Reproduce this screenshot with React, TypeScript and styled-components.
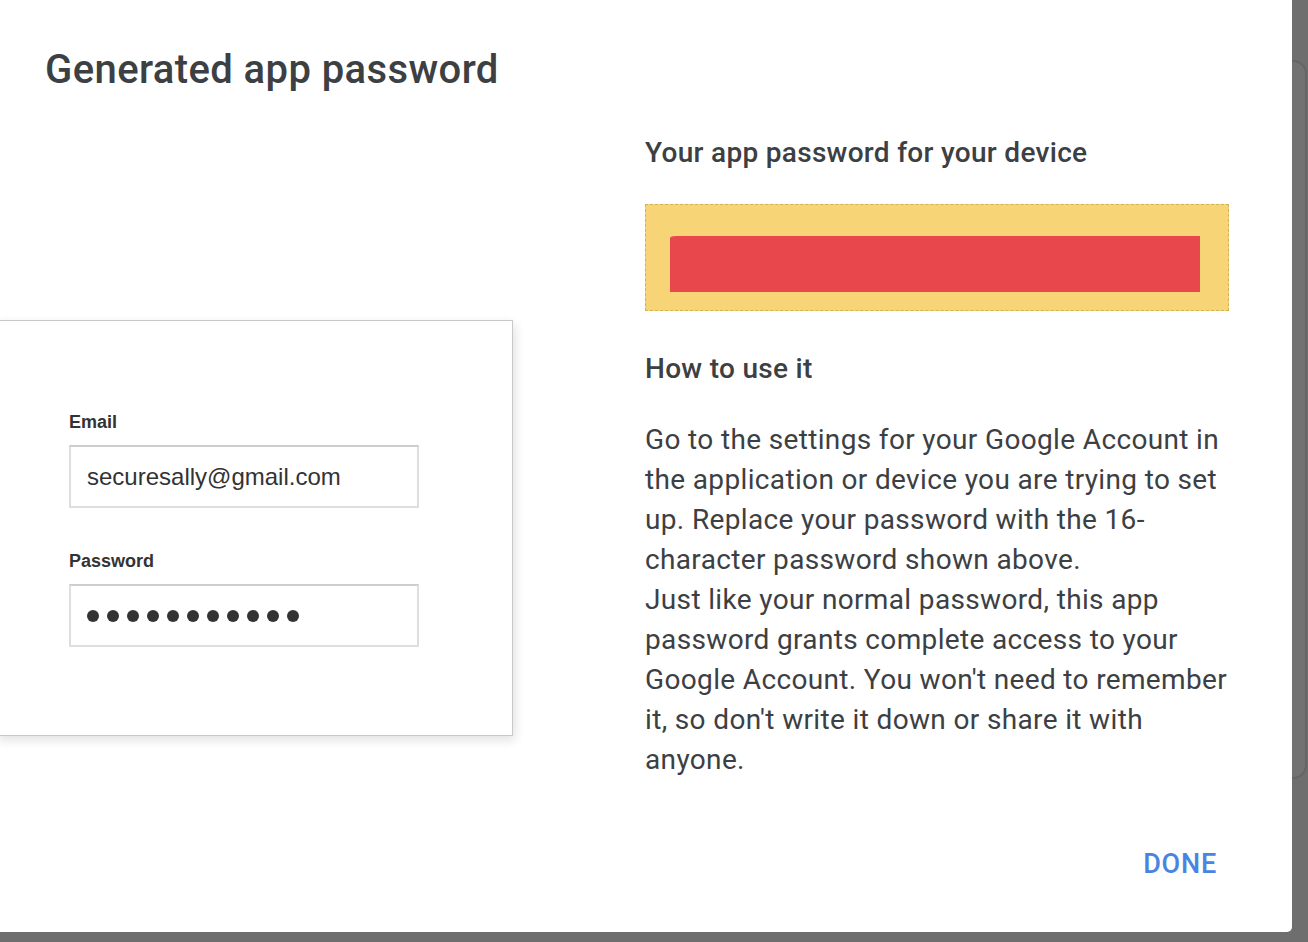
import styled, { createGlobalStyle } from 'styled-components';

const GlobalStyle = createGlobalStyle`
  html, body {
    margin: 0;
    padding: 0;
    background: #6e6e6e;
    overflow: hidden;
  }
`;

const Backdrop = styled.div`
  position: relative;
  width: 1308px;
  height: 942px;
  background: #6e6e6e;
  overflow: hidden;
`;

/* settings page peeking out behind the modal */
const PageBehind = styled.div`
  position: absolute;
  top: 60px;
  left: 900px;
  width: 403px;
  height: 715px;
  border-radius: 14px;
  border: 2px solid #656565;
  background: #727272;
`;

const Dialog = styled.div`
  position: relative;
  width: 1292px;
  height: 932px;
  background: #ffffff;
  border-bottom-right-radius: 5px;
  display: flex;
  flex-direction: column;
  font-family: Roboto, 'Noto Sans', sans-serif;
  color: #3c4043;
`;

const Title = styled.h1`
  margin: 0;
  padding: 44px 0 0 45px;
  font-size: 40px;
  font-weight: 500;
  line-height: 52px;
  letter-spacing: 0.4px;
`;

const Body = styled.div`
  display: flex;
  flex: 1;
`;

const LeftColumn = styled.div`
  width: 645px;
  flex-shrink: 0;
`;

const LoginCard = styled.div`
  margin: 224px 0 0 -4px;
  width: 517px;
  height: 416px;
  box-sizing: border-box;
  border: 1px solid #c9c9c9;
  background: #fff;
  box-shadow: 2px 4px 10px rgba(0, 0, 0, 0.12);
  padding: 90px 0 0 72px;
  font-family: 'Liberation Sans', Arial, sans-serif;
`;

const FieldLabel = styled.div`
  font-size: 18px;
  font-weight: 700;
  color: #333;
  line-height: 22px;
  margin-bottom: 12px;
`;

const FieldBox = styled.div`
  width: 350px;
  height: 63px;
  box-sizing: border-box;
  border: 2px solid #dedede;
  border-top-color: #cdcdcd;
  display: flex;
  align-items: center;
  padding-left: 16px;
  font-size: 24px;
  color: #333;
  margin-bottom: 42px;
`;

const Dots = styled.div`
  display: flex;
  gap: 8px;
`;

const Dot = styled.span`
  width: 12px;
  height: 12px;
  border-radius: 50%;
  background: #333;
`;

const RightColumn = styled.div`
  width: 600px;
  padding-top: 39px;
`;

const Heading = styled.h2`
  margin: 0;
  font-size: 28px;
  font-weight: 500;
  line-height: 36px;
  letter-spacing: 0.3px;
`;

const PasswordBox = styled.div`
  margin: 33px 0 40px;
  width: 584px;
  height: 107px;
  box-sizing: border-box;
  background: #f7d576;
  border: 1px dashed #cfb35a;
  padding: 31px 27px 0 24px;
`;

const Redaction = styled.div`
  width: 530px;
  height: 56px;
  background: #e8474c;
  border-top-left-radius: 6px 2px;
`;

const Instructions = styled.p`
  margin: 33px 0 0;
  font-size: 28px;
  line-height: 40px;
  letter-spacing: 0.35px;
  white-space: nowrap;
  color: #3c4043;
`;

const Footer = styled.div`
  display: flex;
  justify-content: flex-end;
  padding: 0 75px 52px 0;
`;

const DoneButton = styled.button`
  border: none;
  background: none;
  padding: 0;
  font-family: Roboto, 'Noto Sans', sans-serif;
  font-size: 27px;
  font-weight: 500;
  color: #4a84e3;
  letter-spacing: 0.8px;
  cursor: pointer;
`;

const instructionLines = [
  'Go to the settings for your Google Account in',
  'the application or device you are trying to set',
  'up. Replace your password with the 16-',
  'character password shown above.',
  'Just like your normal password, this app',
  'password grants complete access to your',
  "Google Account. You won't need to remember",
  "it, so don't write it down or share it with",
  'anyone.',
];

export default function App() {
  return (
    <>
      <GlobalStyle />
      <Backdrop>
        <PageBehind />
        <Dialog>
          <Title>Generated app password</Title>
          <Body>
            <LeftColumn>
              <LoginCard>
                <FieldLabel>Email</FieldLabel>
                <FieldBox>securesally@gmail.com</FieldBox>
                <FieldLabel>Password</FieldLabel>
                <FieldBox>
                  <Dots>
                    {Array.from({ length: 11 }, (_, i) => (
                      <Dot key={i} />
                    ))}
                  </Dots>
                </FieldBox>
              </LoginCard>
            </LeftColumn>
            <RightColumn>
              <Heading>Your app password for your device</Heading>
              <PasswordBox>
                <Redaction />
              </PasswordBox>
              <Heading>How to use it</Heading>
              <Instructions>
                {instructionLines.map((line, i) => (
                  <span key={i}>
                    {line}
                    {i < instructionLines.length - 1 && <br />}
                  </span>
                ))}
              </Instructions>
            </RightColumn>
          </Body>
          <Footer>
            <DoneButton>DONE</DoneButton>
          </Footer>
        </Dialog>
      </Backdrop>
    </>
  );
}
